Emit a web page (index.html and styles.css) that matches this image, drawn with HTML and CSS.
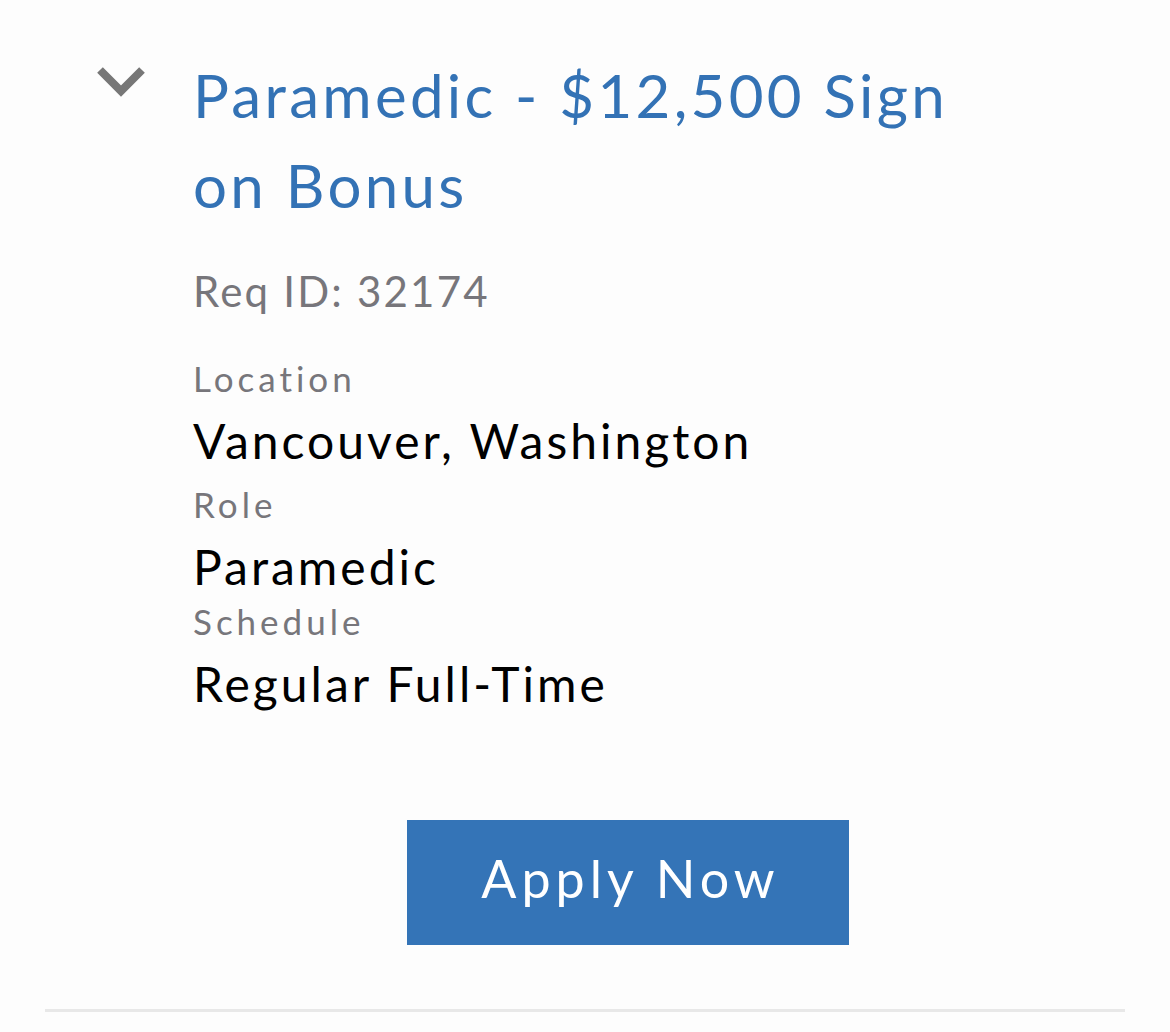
FILE: index.html
```html
<!DOCTYPE html>
<html>
<head>
<meta charset="utf-8">
<link rel="stylesheet" href="styles.css">
</head>
<body>
<div class="job">
  <div class="row">
    <div class="toggle">
      <svg width="48" height="32" viewBox="0 0 48 32"><path d="M3 4 L24 25 L45 4" fill="none" stroke="#777777" stroke-width="8" stroke-linejoin="miter"/></svg>
    </div>
    <div class="content">
      <h2 class="title">Paramedic - $12,500 Sign on Bonus</h2>
      <div class="req">Req ID: 32174</div>
      <div class="fields">
        <div class="field">
          <div class="label">Location</div>
          <div class="value">Vancouver, Washington</div>
        </div>
        <div class="field">
          <div class="label">Role</div>
          <div class="value">Paramedic</div>
        </div>
        <div class="field">
          <div class="label">Schedule</div>
          <div class="value">Regular Full-Time</div>
        </div>
      </div>
    </div>
  </div>
  <div class="actions">
    <a class="apply" href="#">Apply Now</a>
  </div>
  <div class="divider"></div>
</div>
</body>
</html>
```
FILE: styles.css
```css
html, body {
  margin: 0;
  padding: 0;
  background: #fdfdfd;
}
body {
  font-family: Lato, "Open Sans", sans-serif;
}
.job {
  padding: 0 45px;
}
.row {
  display: flex;
  padding-left: 52px;
  padding-top: 50px;
}
.toggle {
  width: 96px;
  flex: none;
  padding-top: 16px;
}
.toggle svg {
  display: block;
}
.content {
  flex: 1;
  padding-right: 130px;
}
.title {
  margin: 0;
  font-weight: 400;
  font-size: 60px;
  line-height: 90px;
  letter-spacing: 3.3px;
  color: #3372b5;
}
.req {
  margin-top: 36px;
  font-size: 42px;
  line-height: 50px;
  letter-spacing: 2.2px;
  color: #77767b;
}
.fields {
  margin-top: 42px;
  display: flex;
  flex-direction: column;
}
.field + .field:last-child {
  margin-top: -9px;
}
.label {
  font-size: 35px;
  line-height: 40px;
  letter-spacing: 4px;
  color: #77767b;
}
.value {
  font-size: 48px;
  line-height: 86px;
  letter-spacing: 3px;
  color: #000;
}
.actions {
  display: flex;
  justify-content: center;
  padding-top: 93px;
  padding-left: 86px;
}
.apply {
  display: block;
  box-sizing: border-box;
  width: 442px;
  height: 125px;
  line-height: 116px;
  padding: 0 0 9px 5px;
  text-align: center;
  background: #3474b7;
  color: #fff;
  text-decoration: none;
  font-size: 52px;
  letter-spacing: 5px;
}
.divider {
  margin-top: 64px;
  height: 3px;
  background: #e8e8e8;
}
```
